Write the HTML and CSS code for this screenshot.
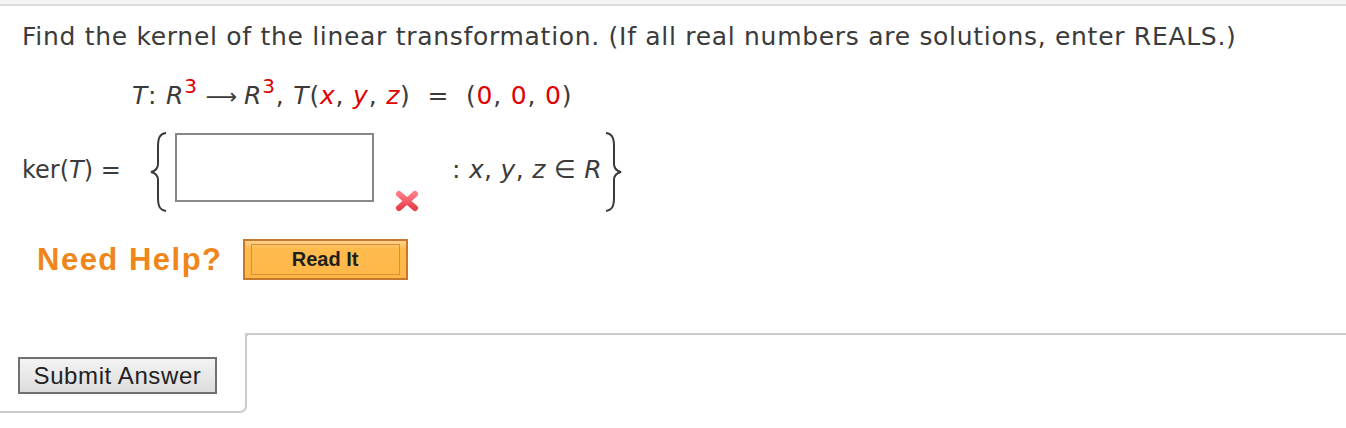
FILE: index.html
```html
<!DOCTYPE html>
<html>
<head>
<meta charset="utf-8">
<link rel="stylesheet" href="styles.css">
</head>
<body>
<div class="topbar"></div>
<div class="question">
  <p class="prompt">Find the kernel of the linear transformation. (If all real numbers are solutions, enter REALS.)</p>
  <p class="equation"><i>T</i>: <i>R</i><sup class="red">3</sup><span class="arrow">&#x27F6;</span><i>R</i><sup class="red">3</sup>, <i>T</i>(<i class="red">x</i>, <i class="red">y</i>, <i class="red">z</i>) <span class="op">=</span> (<span class="red">0</span>, <span class="red">0</span>, <span class="red">0</span>)</p>
  <div class="ker-row">
    <span class="ker-label">ker(<i>T</i>) =</span>
    <svg class="brace brace-left" width="22" height="82" viewBox="0 0 22 82"><path d="M18 2 C11 3 10 8 10 16 L10 33 C10 38 7 40 3 41 C7 42 10 44 10 49 L10 66 C10 74 11 79 18 80" fill="none" stroke="#3a3a3a" stroke-width="2"/></svg>
    <input class="answer" type="text">
    <svg class="wrong" width="26" height="24" viewBox="0 0 26 24"><defs><linearGradient id="xg" x1="0" y1="0" x2="0" y2="1"><stop offset="0" stop-color="#ff7b84"/><stop offset="1" stop-color="#e8404c"/></linearGradient></defs><path d="M5 5 L21 19 M21 5 L5 19" stroke="url(#xg)" stroke-width="6" stroke-linecap="round"/></svg>
    <span class="set-cond">: <i>x</i>, <i>y</i>, <i>z</i> &isin; <i>R</i></span>
    <svg class="brace brace-right" width="22" height="82" viewBox="0 0 22 82"><path d="M4 2 C11 3 12 8 12 16 L12 33 C12 38 15 40 19 41 C15 42 12 44 12 49 L12 66 C12 74 11 79 4 80" fill="none" stroke="#3a3a3a" stroke-width="2"/></svg>
  </div>
  <div class="help-row">
    <span class="need-help">Need Help?</span>
    <button class="read-btn"><span class="read-inner">Read It</span></button>
  </div>
</div>
<div class="footer">
  <div class="submit-cell"><button class="submit-btn">Submit Answer</button></div>
  <div class="rest-cell"></div>
</div>
</body>
</html>
```
FILE: styles.css
```css
html, body {
  margin: 0;
  padding: 0;
  background: #ffffff;
}
body {
  font-family: "DejaVu Sans", "Open Sans", sans-serif;
  color: #3b3b3b;
  width: 1346px;
  height: 428px;
  overflow: hidden;
}
.topbar {
  height: 4px;
  background: #f4f4f4;
  border-bottom: 2px solid #dcdcdc;
}
.question {
  padding-left: 22px;
}
.prompt {
  margin: 0;
  padding-top: 15px;
  font-size: 25px;
  letter-spacing: 0.7px;
  line-height: 32px;
}
.equation {
  margin: 0;
  padding-top: 27px;
  padding-left: 110px;
  font-size: 25px;
  letter-spacing: 0.8px;
  line-height: 32px;
}
.equation sup {
  font-size: 20px;
  line-height: 0;
  vertical-align: 11px;
}
.arrow {
  display: inline-block;
  margin: 0 6px 0 8px;
  font-size: 22px;
}
.op {
  margin: 0 8px;
}
.red {
  color: #e00000;
}
.ker-row {
  display: flex;
  align-items: flex-start;
  margin-top: 18px;
  height: 82px;
}
.ker-label {
  font-size: 24px;
  width: 126px;
  margin-top: 25px;
}
.brace-left {
  margin-right: 5px;
}
.answer {
  width: 195px;
  height: 65px;
  border: 2px solid #888888;
  padding: 0;
  margin: 0;
  box-sizing: content-box;
  margin-top: 2px;
}
.wrong {
  align-self: flex-end;
  margin-left: 20px;
}
.set-cond {
  font-size: 25px;
  letter-spacing: 0.3px;
  margin-left: 32px;
  margin-top: 24px;
}
.brace-right {
  margin-left: 0;
}
.help-row {
  display: flex;
  align-items: center;
  margin-top: 26px;
  padding-left: 15px;
}
.need-help {
  font-family: "Liberation Sans", Arial, sans-serif;
  font-weight: bold;
  font-size: 31px;
  letter-spacing: 1.5px;
  color: #f0861a;
}
.read-btn {
  margin-left: 20px;
  width: 165px;
  height: 41px;
  padding: 3px 6px;
  border: 2px solid #c6792c;
  background: linear-gradient(#ffd28e 0, #ffbb4e 20%, #ffb648 100%);
  cursor: pointer;
  box-sizing: border-box;
}
.read-inner {
  display: block;
  height: 100%;
  box-sizing: border-box;
  border: 1px solid #d4903a;
  font-family: "Liberation Sans", Arial, sans-serif;
  font-weight: bold;
  font-size: 20px;
  line-height: 29px;
  color: #1e1e1e;
}
.footer {
  display: flex;
  margin-top: 53px;
}
.submit-cell {
  width: 247px;
  height: 80px;
  border-right: 2px solid #cccccc;
  border-bottom: 2px solid #cccccc;
  border-bottom-right-radius: 7px;
  padding-left: 18px;
  padding-top: 24px;
  box-sizing: border-box;
}
.rest-cell {
  flex: 1;
  margin-left: -2px;
  height: 20px;
  border-top: 2px solid #cccccc;
  border-left: 2px solid #cccccc;
  border-top-left-radius: 4px;
}
.submit-btn {
  width: 199px;
  height: 37px;
  border: 2px solid #707070;
  background: linear-gradient(#f4f4f4, #dcdcdc);
  font-family: "Liberation Sans", Arial, sans-serif;
  font-size: 24px;
  letter-spacing: 0.6px;
  color: #222222;
  padding: 0;
  box-sizing: border-box;
}
```
